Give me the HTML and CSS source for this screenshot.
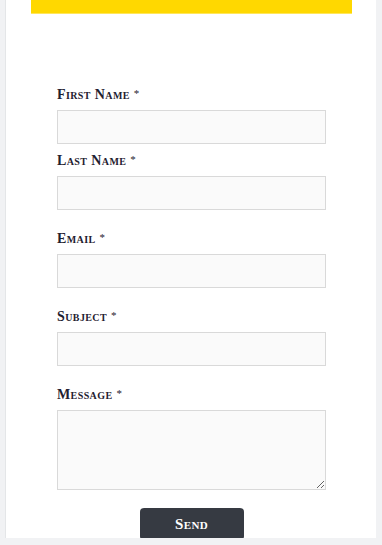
FILE: index.html
```html
<!DOCTYPE html>
<html>
<head>
<meta charset="utf-8">
<link rel="stylesheet" href="styles.css">
</head>
<body>
<div class="card">
  <div class="bar"></div>
  <form class="form">
    <div class="field first">
      <label class="label">First Name <span class="req">*</span></label>
      <input class="input" type="text">
    </div>
    <div class="field second">
      <label class="label">Last Name <span class="req">*</span></label>
      <input class="input" type="text">
    </div>
    <div class="field">
      <label class="label">Email <span class="req">*</span></label>
      <input class="input" type="text">
    </div>
    <div class="field">
      <label class="label">Subject <span class="req">*</span></label>
      <input class="input" type="text">
    </div>
    <div class="field">
      <label class="label">Message <span class="req">*</span></label>
      <textarea class="textarea"></textarea>
    </div>
    <div class="actions">
      <button class="btn" type="button">Send</button>
    </div>
  </form>
</div>
</body>
</html>
```
FILE: styles.css
```css
html, body {
  margin: 0;
  padding: 0;
  background: #f1f2f4;
  height: 545px;
  overflow: hidden;
}
.card {
  margin-left: 5px;
  width: 371px;
  height: 538px;
  background: #fff;
  border-left: 1px solid #e4e6e8;
  overflow: hidden;
  box-sizing: border-box;
}
.bar {
  margin-left: 25px;
  width: 321px;
  height: 14px;
  background: #ffd800;
  border-bottom: 1px solid #ffe65c;
  box-sizing: border-box;
}
.form {
  margin: 70px 0 0 51px;
  width: 269px;
  display: flex;
  flex-direction: column;
}
.field {
  display: flex;
  flex-direction: column;
  gap: 8px;
  margin-bottom: 18px;
}
.field.first {
  margin-bottom: 6px;
}
.label {
  display: block;
  height: 18px;
  line-height: 18px;
  font-family: "Liberation Serif", serif;
  font-weight: bold;
  font-variant: small-caps;
  font-size: 14px;
  color: #1f2130;
  letter-spacing: 0.4px;
}
.req {
  font-size: 11px;
  vertical-align: 2px;
  font-weight: normal;
}
.input {
  display: block;
  box-sizing: border-box;
  width: 269px;
  height: 34px;
  margin: 0;
  background: #fafafa;
  border: 1px solid #d9d9d9;
  border-radius: 0;
  outline: none;
}
.textarea {
  display: block;
  box-sizing: border-box;
  width: 269px;
  height: 80px;
  margin: 0;
  background: #fafafa;
  border: 1px solid #d9d9d9;
  border-radius: 0;
  resize: vertical;
}
.actions {
  display: flex;
  justify-content: center;
}
.btn {
  width: 104px;
  height: 32px;
  background: #363a42;
  color: #fff;
  border: 0;
  border-radius: 4px;
  font-family: "Liberation Serif", serif;
  font-weight: bold;
  font-variant: small-caps;
  font-size: 15px;
  letter-spacing: 0.3px;
  padding: 0;
}
```
